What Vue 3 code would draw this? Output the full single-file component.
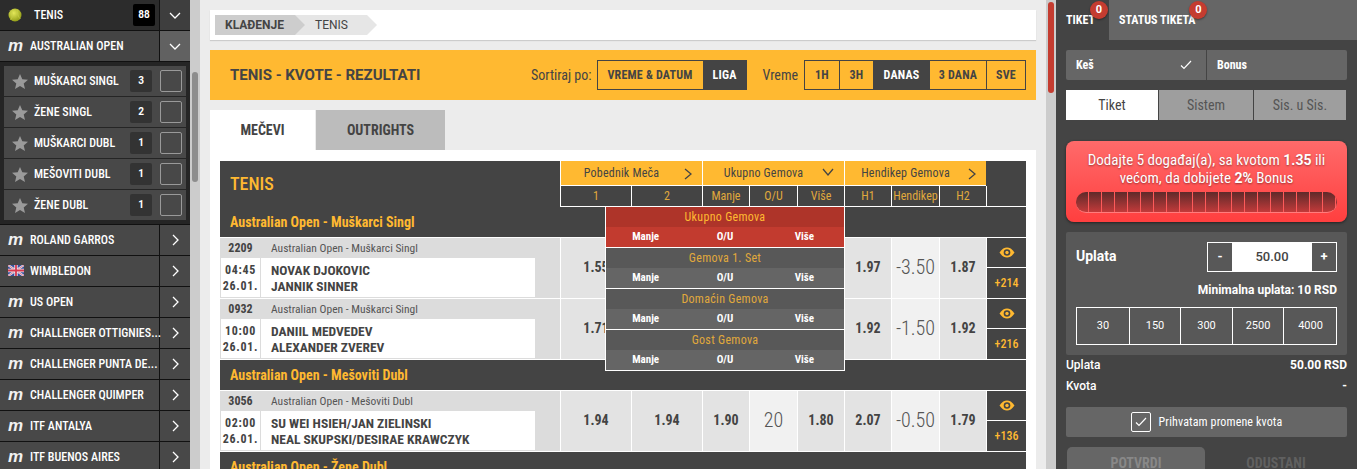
<template>
  <div class="page">
    <aside class="side">
      <div class="row top">
        <div class="row-main">
          <svg class="ball" width="14" height="14" viewBox="0 0 14 14">
            <defs>
              <radialGradient id="ballGrad" cx="0.4" cy="0.35" r="0.7">
                <stop offset="0" stop-color="#e4e85a" />
                <stop offset="1" stop-color="#8f9a14" />
              </radialGradient>
            </defs>
            <circle cx="7" cy="7" r="6.5" fill="url(#ballGrad)" />
            <path d="M2 2.5C5 5 5 9 2.500 12M10 1.500C9 5 10 9 12.500 11" fill="none" stroke="#c9d04a" stroke-width="0.7" />
          </svg>
          <span class="row-label tenis-label">TENIS</span>
          <span class="top-count">88</span>
        </div>
        <div class="row-arrow"><svg width="12" height="7" viewBox="0 0 12 7"><polyline points="1,1 6,6 11,1" /></svg></div>
      </div>
      <div class="row open">
        <div class="row-main">
          <span class="m-logo">m</span>
          <span class="row-label">AUSTRALIAN OPEN</span>
        </div>
        <div class="row-arrow"><svg width="12" height="7" viewBox="0 0 12 7"><polyline points="1,1 6,6 11,1" /></svg></div>
      </div>
      <div class="sub-list">
        <div class="sub-item" v-for="s in subItems" :key="s.name">
          <svg class="star" width="16" height="15" viewBox="0 0 16 15"><polygon points="8,0 10.300,5.200 16,5.800 11.700,9.500 13,15 8,12.100 3,15 4.300,9.500 0,5.800 5.700,5.200" /></svg>
          <span class="sub-name">{{ s.name }}</span>
          <span class="sub-count">{{ s.count }}</span>
          <span class="sub-check"></span>
        </div>
      </div>
      <div class="row" v-for="l in leagues" :key="l.name">
        <div class="row-main">
          <svg v-if="l.flag" class="flag" width="16" height="11" viewBox="0 0 16 11">
            <rect width="16" height="11" fill="#3a4f9c" />
            <path d="M0 0L16 11M16 0L0 11" stroke="#e8e8f0" stroke-width="2.200" />
            <path d="M0 0L16 11M16 0L0 11" stroke="#d9506a" stroke-width="0.700" />
            <path d="M8 0V11M0 5.500H16" stroke="#e8e8f0" stroke-width="3.400" />
            <path d="M8 0V11M0 5.500H16" stroke="#d9384f" stroke-width="1.800" />
          </svg>
          <span v-else class="m-logo">m</span>
          <span class="row-label">{{ l.name }}</span>
        </div>
        <div class="row-arrow"><svg width="7" height="12" viewBox="0 0 7 12"><polyline points="1,1 6,6 1,11" /></svg></div>
      </div>
    </aside>

    <div class="track"><div class="thumb grey"></div></div>

    <main class="main">
      <div class="crumbs">
        <span class="crumb first">KLAĐENJE</span>
        <span class="crumb second">TENIS</span>
      </div>

      <div class="sortbar">
        <h1>TENIS - KVOTE - REZULTATI</h1>
        <span class="sort-label">Sortiraj po:</span>
        <div class="btn-group sort-group">
          <span class="vreme-btn">VREME &amp; DATUM</span>
          <span class="liga-btn on">LIGA</span>
        </div>
        <span class="sort-label time-label">Vreme</span>
        <div class="btn-group">
          <span v-for="t in times" :key="t.label" :class="{ on: t.on }" :style="{ width: t.w + 'px' }">{{ t.label }}</span>
        </div>
      </div>

      <div class="tabs">
        <span class="tab active">MEČEVI</span>
        <span class="tab">OUTRIGHTS</span>
      </div>

      <div class="content">
        <div class="table">
          <div class="thead grid">
            <div class="sport">TENIS</div>
            <div class="market m2">Pobednik Meča<svg class="mk-arrow" width="8" height="12" viewBox="0 0 8 12"><polyline points="1,1 7,6 1,11" /></svg></div>
            <div class="market m3">Ukupno Gemova<svg class="mk-arrow" width="12" height="8" viewBox="0 0 12 8"><polyline points="1,1 6,7 11,1" /></svg></div>
            <div class="market m3">Hendikep Gemova<svg class="mk-arrow" width="8" height="12" viewBox="0 0 8 12"><polyline points="1,1 7,6 1,11" /></svg></div>
            <div class="corner"></div>
            <div class="sub" v-for="h in subHeads" :key="h">{{ h }}</div>
          </div>

          <template v-for="g in groups" :key="g.name">
            <div class="league">{{ g.name }}</div>
            <div class="match grid" v-for="m in g.matches" :key="m.id">
              <div class="info">
                <span class="mid">{{ m.id }}</span>
                <span class="mleague">{{ g.name }}</span>
                <span class="mtime">{{ m.time }}<br />26.01.</span>
                <span class="teams">{{ m.home }}<br />{{ m.away }}</span>
              </div>
              <div class="odd" v-for="(o, i) in m.odds" :key="i" :class="{ line: i === 3 || i === 6 }">{{ o }}</div>
              <div class="extra">
                <span class="eye">
                  <svg width="16" height="11" viewBox="0 0 16 11">
                    <path d="M0.500 5.500C3 1.800 5.500 0.500 8 0.500S13 1.800 15.500 5.500C13 9.200 10.500 10.500 8 10.500S3 9.200 0.500 5.500Z" fill="#ffb931" />
                    <circle cx="8" cy="5.500" r="3.300" fill="#444" />
                    <circle cx="8" cy="5.500" r="1.700" fill="#ffb931" />
                  </svg>
                </span>
                <span class="more">{{ m.more }}</span>
              </div>
            </div>
          </template>
          <div class="league">Australian Open - Žene Dubl</div>

          <div class="popup">
            <div class="pop-sec" v-for="(p, i) in popup" :key="p" :class="{ hot: i === 0 }">
              <div class="pop-title">{{ p }}</div>
              <div class="pop-row"><span>Manje</span><span>O/U</span><span>Više</span></div>
            </div>
          </div>
        </div>
      </div>
    </main>

    <div class="track"><div class="thumb red"></div></div>

    <aside class="slip">
      <div class="slip-tabs">
        <span class="slip-tab active">TIKET<i class="badge">0</i></span>
        <span class="slip-tab">STATUS TIKETA<i class="badge">0</i></span>
      </div>
      <div class="slip-body">
        <div class="pay">
          <span class="pay-cash">Keš
            <svg width="12" height="10" viewBox="0 0 12 10"><polyline points="1,5.500 4,8.500 11,1" /></svg>
          </span>
          <span class="pay-bonus">Bonus</span>
        </div>
        <div class="types">
          <span class="type active">Tiket</span>
          <span class="type">Sistem</span>
          <span class="type">Sis. u Sis.</span>
        </div>
        <div class="promo">
          <p>Dodajte 5 događaj(a), sa kvotom <b>1.35</b> ili većom, da dobijete <b>2%</b> Bonus</p>
          <div class="progress"></div>
        </div>
        <div class="stake">
          <div class="stake-top">
            <span class="stake-label">Uplata</span>
            <div class="stepper">
              <span class="step">-</span>
              <span class="amount">50.00</span>
              <span class="step">+</span>
            </div>
          </div>
          <div class="min">Minimalna uplata: 10 RSD</div>
          <div class="quick">
            <span v-for="q in quick" :key="q">{{ q }}</span>
          </div>
        </div>
        <div class="sum"><span>Uplata</span><b>50.00 RSD</b></div>
        <div class="sum"><span>Kvota</span><b>-</b></div>
        <div class="accept">
          <span class="accept-box"><svg width="12" height="10" viewBox="0 0 12 10"><polyline points="1,5.500 4,8.500 11,1" /></svg></span>
          <span>Prihvatam promene kvota</span>
        </div>
        <div class="actions">
          <span class="confirm">POTVRDI</span>
          <span class="cancel">ODUSTANI</span>
        </div>
      </div>
    </aside>
  </div>
</template>

<script setup>
const subItems = [
  { name: 'MUŠKARCI SINGL', count: 3 },
  { name: 'ŽENE SINGL', count: 2 },
  { name: 'MUŠKARCI DUBL', count: 1 },
  { name: 'MEŠOVITI DUBL', count: 1 },
  { name: 'ŽENE DUBL', count: 1 }
]

const leagues = [
  { name: 'ROLAND GARROS' },
  { name: 'WIMBLEDON', flag: true },
  { name: 'US OPEN' },
  { name: 'CHALLENGER OTTIGNIES...' },
  { name: 'CHALLENGER PUNTA DE...' },
  { name: 'CHALLENGER QUIMPER' },
  { name: 'ITF ANTALYA' },
  { name: 'ITF BUENOS AIRES' }
]

const times = [
  { label: '1H', w: 34 },
  { label: '3H', w: 34 },
  { label: 'DANAS', w: 56, on: true },
  { label: '3 DANA', w: 57 },
  { label: 'SVE', w: 39 }
]

const subHeads = ['1', '2', 'Manje', 'O/U', 'Više', 'H1', 'Hendikep', 'H2', '']

const groups = [
  {
    name: 'Australian Open - Muškarci Singl',
    matches: [
      { id: '2209', time: '04:45', home: 'NOVAK DJOKOVIC', away: 'JANNIK SINNER', odds: ['1.55', '', '', '', '', '1.97', '-3.50', '1.87'], more: '+214' },
      { id: '0932', time: '10:00', home: 'DANIIL MEDVEDEV', away: 'ALEXANDER ZVEREV', odds: ['1.71', '', '', '', '', '1.92', '-1.50', '1.92'], more: '+216' }
    ]
  },
  {
    name: 'Australian Open - Mešoviti Dubl',
    matches: [
      { id: '3056', time: '02:00', home: 'SU WEI HSIEH/JAN ZIELINSKI', away: 'NEAL SKUPSKI/DESIRAE KRAWCZYK', odds: ['1.94', '1.94', '1.90', '20', '1.80', '2.07', '-0.50', '1.79'], more: '+136' }
    ]
  }
]

const popup = ['Ukupno Gemova', 'Gemova 1. Set', 'Domaćin Gemova', 'Gost Gemova']
const quick = [30, 150, 300, 2500, 4000]
</script>

<style>
html, body {
  margin: 0;
  height: 100%;
  overflow: hidden;
  background: #ececec;
}
</style>

<style scoped>
* {
  box-sizing: border-box;
}
.page {
  display: flex;
  height: 469px;
  overflow: hidden;
  font-family: "Roboto Condensed", "Liberation Sans Narrow", Roboto, sans-serif;
  font-stretch: condensed;
  color: #444;
}

/* left menu */
.side {
  width: 190px;
  flex: none;
  background: #484848;
  color: #fff;
}
.row {
  display: flex;
  height: 31px;
  border-bottom: 1px solid #111;
  background: #484848;
}
.row-main {
  flex: 1;
  display: flex;
  align-items: center;
  padding: 0 0 1px 8px;
  border-right: 1px solid #111;
  min-width: 0;
}
.row-arrow {
  width: 30px;
  flex: none;
  display: flex;
  align-items: center;
  justify-content: center;
}
.row-arrow svg {
  fill: none;
  stroke: #fff;
  stroke-width: 1.300;
}
.row-label {
  font-size: 12px;
  font-weight: 500;
  white-space: nowrap;
}
.top {
  background: #2c2c2c;
}
.top .row-arrow {
  background: #3e3e3e;
}
.ball {
  margin-right: 12px;
}
.top-count {
  margin-left: auto;
  margin-right: 4px;
  width: 22px;
  height: 22px;
  background: #000;
  border-radius: 2px;
  font: 700 10px/22px Roboto, sans-serif;
  text-align: center;
}
.open {
  background: #444;
}
.open .row-arrow {
  background: #616161;
}
.m-logo {
  width: 14px;
  margin-right: 8px;
  font: italic 900 17px/20px "Liberation Sans", sans-serif;
  color: #f1f1f1;
  flex: none;
}
.flag {
  width: 16px;
  margin-right: 6px;
  flex: none;
}
.sub-list {
  background: #252525;
  padding: 4px;
  height: 163px;
  border-bottom: 1px solid #111;
}
.sub-item {
  display: flex;
  align-items: center;
  height: 30px;
  margin-bottom: 1px;
  background: #484848;
  padding-left: 8px;
}
.star {
  fill: #9a9a9a;
  flex: none;
  margin-right: 6px;
}
.sub-name {
  flex: 1;
  font-size: 12px;
  font-weight: 500;
}
.sub-count {
  width: 22px;
  height: 22px;
  background: #333;
  border-radius: 2px;
  margin-right: 8px;
  font: 700 10px/22px Roboto, sans-serif;
  text-align: center;
}
.sub-check {
  width: 22px;
  height: 22px;
  border: 1px solid #999;
  border-radius: 2px;
  margin-right: 4px;
}

/* scrollbars */
.track {
  width: 10px;
  flex: none;
  background: #ccc;
}
.thumb {
  width: 6px;
  margin-left: 2px;
  border-radius: 3px;
}
.thumb.grey {
  height: 110px;
  margin-top: 72px;
  background: #8d8d8d;
}
.thumb.red {
  height: 91px;
  margin-top: 2px;
  background: #c43c30;
}

/* main */
.main {
  flex: 1;
  min-width: 0;
  padding: 10px 10px 0;
}
.crumbs {
  display: flex;
  align-items: center;
  height: 30px;
  padding-left: 5px;
  background: #fff;
  box-shadow: 0 1px 1px #ccc;
  margin-bottom: 10px;
  font-family: Roboto, sans-serif;
  font-stretch: normal;
  font-size: 12px;
}
.crumb {
  height: 20px;
  line-height: 20px;
  clip-path: polygon(0 0, calc(100% - 10px) 0, 100% 50%, calc(100% - 10px) 100%, 0 100%);
}
.crumb.first {
  position: relative;
  z-index: 1;
  width: 90px;
  padding-left: 10px;
  background: #cdcdcd;
  font-weight: 700;
}
.crumb.second {
  width: 82px;
  margin-left: -10px;
  padding-left: 20px;
  background: #e6e6e6;
}
.sortbar {
  display: flex;
  align-items: center;
  height: 50px;
  padding: 0 10px 0 20px;
  background: #ffb931;
  margin-bottom: 10px;
}
.sortbar h1 {
  margin: 0 auto 0 0;
  font: 700 15px Roboto, sans-serif;
}
.sort-label {
  font-size: 14px;
  margin-right: 5px;
}
.time-label {
  margin-left: 16px;
  margin-right: 6px;
}
.btn-group {
  display: flex;
  height: 30px;
  border: 1px solid #444;
}
.btn-group span {
  display: flex;
  align-items: center;
  justify-content: center;
  font-size: 12px;
  letter-spacing: 0.2px;
  font-weight: 700;
  border-left: 1px solid #444;
}
.btn-group span:first-child {
  border-left: 0;
}
.btn-group .on {
  background: #444;
  color: #fff;
}
.vreme-btn {
  width: 105px;
}
.liga-btn {
  width: 43px;
}
.tabs {
  display: flex;
  height: 40px;
}
.tab {
  width: 129px;
  margin-left: 1px;
  background: #bcbcbc;
  font-size: 14px;
  font-weight: 700;
  line-height: 40px;
  text-align: center;
}
.tab.active {
  width: 105px;
  margin-left: 0;
  background: #fff;
}
.content {
  background: #fff;
  padding: 11px 10px 0;
  height: 330px;
}
.table {
  position: relative;
  background: #444;
  width: 806px;
}
.grid {
  display: grid;
  grid-template-columns: 340px 71px 71px 47px 48px 47px 47px 48px 47px 40px;
}

/* table head */
.thead {
  grid-template-rows: 25px 21px;
}
.sport {
  grid-row: span 2;
  padding-left: 10px;
  color: #ffb931;
  font-size: 18px;
  font-weight: 500;
  line-height: 46px;
}
.market {
  position: relative;
  background: #ffb931;
  border-left: 1px solid #fff;
  border-bottom: 1px solid #fff;
  font-size: 12px;
  line-height: 24px;
  text-align: center;
  padding-right: 20px;
  letter-spacing: 0.2px;
}
.m2 {
  grid-column: span 2;
}
.m3 {
  grid-column: span 3;
}
.mk-arrow {
  position: absolute;
  right: 10px;
  top: 7px;
  fill: none;
  stroke: #444;
  stroke-width: 1.300;
}
.corner {
  background: #444;
}
.sub {
  border-left: 1px solid #fff;
  border-bottom: 1px solid #fff;
  color: #e0a93c;
  font-size: 12px;
  line-height: 20px;
  text-align: center;
  white-space: nowrap;
}
.league {
  height: 31px;
  padding-left: 10px;
  border-bottom: 1px solid #fff;
  color: #ffb931;
  font-size: 14px;
  font-weight: 700;
  line-height: 30px;
}

/* match rows */
.match {
  height: 61px;
  border-bottom: 1px solid #fff;
}
.info {
  display: grid;
  grid-template-columns: 39px 274px;
  grid-template-rows: 20px 39px;
  column-gap: 1px;
  padding-left: 1px;
  background: #dcdcdc;
}
.mid {
  font-size: 12px;
  font-weight: 700;
  line-height: 20px;
  text-align: center;
}
.mleague {
  padding-left: 10px;
  color: #555;
  font-size: 11.5px;
  line-height: 20px;
}
.mtime {
  background: #fff;
  font-size: 12px;
  font-weight: 700;
  letter-spacing: 0.7px;
  line-height: 16px;
  padding-top: 4px;
  text-align: center;
}
.teams {
  background: #fff;
  padding: 4px 0 0 10px;
  font-size: 13.5px;
  font-weight: 700;
  line-height: 16px;
}
.odd {
  display: flex;
  align-items: center;
  justify-content: center;
  padding-bottom: 2px;
  border-left: 1px solid #fff;
  background: #e3e3e3;
  font-size: 14px;
  font-weight: 700;
}
.odd.line {
  background: #f1f1f1;
  color: #555;
  font-size: 20px;
  font-weight: 300;
}
.extra {
  display: flex;
  flex-direction: column;
  border-left: 1px solid #fff;
}
.eye {
  display: flex;
  align-items: center;
  justify-content: center;
  height: 30px;
  border-bottom: 1px solid #fff;
}
.more {
  flex: 1;
  color: #ffb931;
  font-size: 12px;
  font-weight: 500;
  line-height: 30px;
  text-align: center;
}

/* market dropdown */
.popup {
  position: absolute;
  left: 385px;
  top: 45px;
  width: 240px;
  border: 1px solid #fff;
}
.pop-sec {
  border-bottom: 1px solid #fff;
}
.pop-sec:last-child {
  border-bottom: 0;
}
.pop-title {
  height: 20px;
  background: #585858;
  color: #e0a93c;
  font-size: 12px;
  line-height: 20px;
  text-align: center;
  letter-spacing: 0.3px;
}
.pop-row {
  display: grid;
  grid-template-columns: repeat(3, 1fr);
  height: 20px;
  background: #656565;
  color: #fff;
  font-size: 11px;
  font-weight: 700;
  line-height: 20px;
  text-align: center;
}
.hot .pop-title {
  background: #ae3429;
  color: #ffb931;
}
.hot .pop-row {
  background: #c23b2f;
}

/* ticket panel */
.slip {
  width: 301px;
  flex: none;
  background: #444;
  color: #fff;
}
.slip-tabs {
  display: flex;
  height: 40px;
  background: #666;
}
.slip-tab {
  position: relative;
  padding: 0 10px;
  font-size: 12px;
  font-weight: 700;
  line-height: 40px;
}
.slip-tab.active {
  width: 53px;
  background: #444;
}
.badge {
  position: absolute;
  top: 1px;
  right: 1px;
  width: 18px;
  height: 18px;
  border-radius: 50%;
  background: #c43c30;
  box-shadow: 0 1px 2px rgba(0, 0, 0, 0.4);
  font: 700 11px/18px Roboto, sans-serif;
  text-align: center;
}
.slip-tab + .slip-tab .badge {
  right: -2px;
}
.slip-body {
  padding: 10px;
}
.pay {
  display: flex;
  height: 30px;
  margin-bottom: 10px;
  background: #666;
  border-radius: 2px;
  font-size: 12px;
  font-weight: 700;
  line-height: 30px;
}
.pay-cash {
  display: flex;
  align-items: center;
  justify-content: space-between;
  width: 141px;
  padding: 0 14px 0 10px;
  border-right: 1px solid #444;
}
.pay-cash svg,
.accept-box svg {
  fill: none;
  stroke: #fff;
  stroke-width: 1.200;
}
.pay-bonus {
  padding-left: 10px;
}
.types {
  display: grid;
  grid-template-columns: 92px 94px 92px;
  gap: 1px;
  height: 30px;
  margin-bottom: 21px;
}
.type {
  background: #9e9e9e;
  color: #555;
  font-size: 14px;
  line-height: 30px;
  text-align: center;
}
.type.active {
  background: #fff;
  color: #444;
}
.promo {
  height: 81px;
  margin-bottom: 10px;
  padding: 10px 8px 0;
  border-radius: 8px;
  background: linear-gradient(#ff6a6a, #ff3f3f);
  box-shadow: 0 1px 3px rgba(0, 0, 0, 0.5);
}
.promo p {
  margin: 0 0 5px;
  font-size: 15px;
  line-height: 18px;
  text-align: center;
  text-shadow: 0 1px 2px rgba(0, 0, 0, 0.4);
}
.promo b {
  font-family: Roboto, sans-serif;
  font-stretch: normal;
  font-size: 14px;
}
.progress {
  height: 21px;
  margin: 0 2px;
  border-radius: 10px;
  border-bottom: 1px solid #ff7d7d;
  background:
    repeating-linear-gradient(90deg, transparent 0 12px, #ff5a5a 12px 13px),
    linear-gradient(#5e2a2a, #c23a3a);
}
.stake {
  height: 123px;
  padding: 10px;
  background: #585858;
  border-radius: 2px;
}
.stake-top {
  display: flex;
  align-items: center;
  justify-content: space-between;
  height: 30px;
  margin-bottom: 11px;
}
.stake-label {
  font: 700 14px Roboto, sans-serif;
  padding-bottom: 2px;
}
.stepper {
  display: flex;
  width: 130px;
  height: 30px;
  border: 1px solid #fff;
  font: 700 13px/28px Roboto, sans-serif;
  text-align: center;
}
.step {
  width: 24px;
}
.amount {
  flex: 1;
  background: #fff;
  color: #444;
  font-weight: 500;
}
.min {
  margin-bottom: 10px;
  font: 700 12px/14px Roboto, sans-serif;
  text-align: right;
}
.quick {
  display: grid;
  grid-template-columns: 52px 51px 52px 51px 54px;
  height: 38px;
  border: 1px solid #fff;
  font: 400 11px/36px Roboto, sans-serif;
  text-align: center;
}
.quick span + span {
  border-left: 1px solid #fff;
}
.sum {
  display: flex;
  justify-content: space-between;
  height: 21px;
  font: 500 12px/21px Roboto, sans-serif;
}
.sum b {
  font-weight: 700;
}
.accept {
  display: flex;
  align-items: center;
  justify-content: center;
  gap: 8px;
  height: 30px;
  margin: 10px 0;
  background: #666;
  border-radius: 2px;
  font-size: 12px;
  letter-spacing: 0.13px;
}
.accept-box {
  display: flex;
  align-items: center;
  justify-content: center;
  width: 20px;
  height: 20px;
  border: 1px solid #fff;
  border-radius: 2px;
}
.actions {
  display: flex;
  padding-left: 1px;
}
.confirm,
.cancel {
  height: 40px;
  font-size: 14px;
  font-weight: 700;
  line-height: 32px;
  text-align: center;
  color: #888;
}
.confirm {
  width: 138px;
  background: #666;
  border-radius: 5px 5px 0 0;
}
.cancel {
  flex: 1;
  color: #606060;
}
</style>
